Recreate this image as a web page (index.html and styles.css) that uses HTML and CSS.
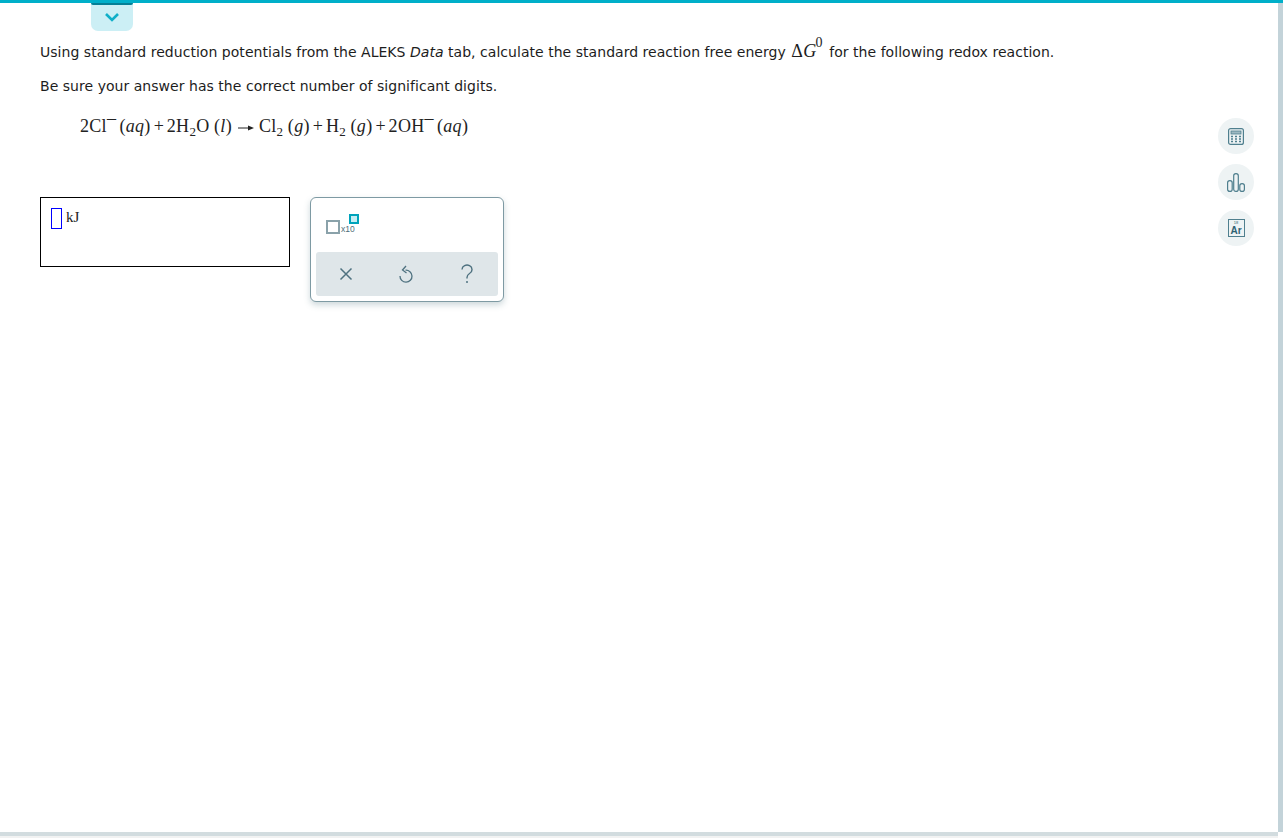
FILE: index.html
```html
<!DOCTYPE html>
<html lang="en">
<head>
<meta charset="utf-8">
<title>Redox reaction</title>
<link rel="stylesheet" href="styles.css">
</head>
<body>
<div class="page">
  <div class="topbar"></div>
  <div class="main">
    <div class="content">
      <div class="tab"><svg width="16" height="10" viewBox="0 0 16 10"><path d="M2 2l6 6 6-6" fill="none" stroke="#10afc8" stroke-width="2.6"/></svg></div>
      <p class="line first">Using standard reduction potentials from the ALEKS <i>Data</i> tab, calculate the standard reaction free energy <span class="math">Δ<i>G</i><sup class="zero">0</sup></span> for the following redox reaction.</p>
      <p class="line second">Be sure your answer has the correct number of significant digits.</p>
      <div class="equation"><span>2Cl</span><span class="charge">¯</span><span class="paren">(<i>aq</i>)</span><span class="plus">+</span><span>2H<sub>2</sub>O</span><span class="paren">(<i>l</i>)</span><svg class="arrow" width="16" height="8" viewBox="0 0 16 8"><path d="M0 4h11" stroke="#222" stroke-width="1"/><path d="M10 1.500l6 2.500-6 2.500z" fill="#222"/></svg><span>Cl<sub>2</sub></span><span class="paren">(<i>g</i>)</span><span class="plus">+</span><span>H<sub>2</sub></span><span class="paren">(<i>g</i>)</span><span class="plus">+</span><span>2OH</span><span class="charge">¯</span><span class="paren">(<i>aq</i>)</span></div>
      <div class="answer-row">
        <div class="answer">
          <span class="cursor"></span><span class="unit">kJ</span>
        </div>
        <div class="palette">
          <div class="palette-top">
            <span class="box"></span><span class="x10">x10</span><span class="expo"></span>
          </div>
          <div class="actions">
            <svg width="14" height="14" viewBox="0 0 14 14"><path d="M1.500 1.500l11 11M12.500 1.500l-11 11" stroke="#4f7280" stroke-width="1.500" fill="none"/></svg>
            <svg width="14" height="18" viewBox="0 0 14 18"><path d="M6.500 5.200A6 6 0 1 1 1 11M7 1L3.500 5l4 3" stroke="#4f7280" stroke-width="1.300" fill="none"/></svg>
            <svg width="14" height="20" viewBox="0 0 14 20"><path d="M2 5.500a5 4.500 0 1 1 7.500 4c-1.500 1-2.500 2-2.500 4v1" stroke="#4f7280" stroke-width="1.400" fill="none"/><circle cx="7" cy="18" r="1" fill="#4f7280"/></svg>
          </div>
        </div>
      </div>
    </div>
    <div class="rail">
      <div class="tool"><svg width="16" height="17" viewBox="0 0 16 17"><rect x=".6" y=".6" width="14.800" height="15.800" rx="2" fill="none" stroke="#4f7f8e" stroke-width="1.200"/><rect x="3" y="3" width="10" height="3" fill="#9db8c1" stroke="#4f7f8e" stroke-width=".8"/><path d="M3 8.500h2M7 8.500h2M11 8.500h2M3 11h2M7 11h2M11 11h2M3 13.500h2M7 13.500h2M11 13.500h2" stroke="#4f7f8e" stroke-width="1.500"/></svg></div>
      <div class="tool"><svg width="18" height="19" viewBox="0 0 18 19"><g fill="none" stroke="#4f7f8e" stroke-width="1.200"><rect x=".6" y="7.600" width="4.600" height="10.800" rx="2.200"/><rect x="6.700" y=".6" width="4.600" height="17.800" rx="2.200"/><rect x="12.800" y="10.600" width="4.600" height="7.800" rx="2.200"/></g></svg></div>
      <div class="tool"><div class="element"><span class="num">18</span><span class="sym">Ar</span></div></div>
    </div>
    <div class="edge"></div>
  </div>
  <div class="footer"></div>
</div>
</body>
</html>
```
FILE: styles.css
```css
html, body { margin: 0; padding: 0; background: #fff; }
.page { width: 1283px; height: 838px; display: flex; flex-direction: column; overflow: hidden; font-family: "DejaVu Sans", sans-serif; color: #1d1d1d; }
.topbar { height: 3px; background: #00afc9; flex: none; }
.main { flex: 1; display: flex; min-height: 0; }
.content { flex: 1; padding-left: 40px; min-width: 0; }
.tab { width: 42px; height: 28px; margin-left: 51px; background: #cceff5; border-radius: 0 0 7px 7px; display: flex; justify-content: center; align-items: center; box-sizing: border-box; padding-bottom: 1px; position: relative; }
.tab::before { content: ""; position: absolute; top: 0; left: 0; right: 0; height: 2px; background: #047f96; border-radius: 0 0 3px 3px; }
.line { margin: 0; font-size: 14px; line-height: 20px; height: 20px; white-space: nowrap; letter-spacing: 0.035px; }
.first { margin-top: 11px; }
.second { margin-top: 14px; }
.math { font-family: "Liberation Serif", serif; font-size: 18px; line-height: 0; letter-spacing: .3px; margin-left: 1px; margin-right: 1px; }
.zero { font-size: 14px; line-height: 0; vertical-align: 10px; margin-left: -1px; margin-right: 1px; }
.equation { display: flex; align-items: baseline; font-family: "Liberation Serif", serif; font-size: 18px; line-height: 30px; margin: 15px 0 0 40px; white-space: nowrap; color: #222; letter-spacing: .3px; }
.equation sub { font-size: 13px; line-height: 0; vertical-align: -4px; }
.charge { width: 8px; line-height: 0; position: relative; top: 1px; }
.paren { margin-left: 4.500px; letter-spacing: .3px; }
.plus { margin: 0 3px; letter-spacing: 0; }
.arrow { margin: 0 5px 0 6px; align-self: center; position: relative; top: 2px; }
.answer-row { display: flex; align-items: flex-start; gap: 20px; margin-top: 56px; }
.answer { width: 250px; height: 70px; border: 1px solid #000; box-sizing: border-box; padding: 10px 0 0 10px; display: flex; align-items: flex-start; }
.cursor { width: 9px; height: 19px; border: 1px solid #00f; display: block; }
.unit { font-family: "Liberation Serif", serif; font-size: 15px; line-height: 18px; margin-left: 4px; color: #222; }
.palette { width: 194px; height: 105px; box-sizing: border-box; border: 1px solid #7e9aa3; border-radius: 6px; padding: 0 5px 5px; box-shadow: 0 3px 6px rgba(90,125,135,.3); display: flex; flex-direction: column; justify-content: space-between; background: #fff; }
.palette-top { height: 54px; position: relative; }
.box { position: absolute; left: 10px; top: 22px; width: 10px; height: 10px; border: 2px solid #8aa2aa; }
.x10 { position: absolute; left: 25px; top: 26px; font-family: "Liberation Sans", sans-serif; font-size: 8.500px; line-height: 10px; color: #4f6f7b; }
.expo { position: absolute; left: 33px; top: 16px; width: 6px; height: 6px; border: 2px solid #00a3bb; background: #c5eef4; }
.actions { height: 44px; background: #dfe6e9; border-radius: 3px; display: flex; justify-content: space-around; align-items: center; padding-right: 1px; }
.rail { width: 36px; margin: 115px 24px 0 0; flex: none; display: flex; flex-direction: column; gap: 10px; }
.tool { width: 36px; height: 36px; border-radius: 50%; background: #eef3f4; display: flex; justify-content: center; align-items: center; }
.element { width: 15px; height: 16px; border: 1px solid #4f7f8e; display: flex; flex-direction: column; align-items: center; font-family: "Liberation Sans", sans-serif; color: #2f6273; }
.num { font-size: 4px; line-height: 6px; }
.sym { font-size: 10px; line-height: 10px; font-weight: 700; }
.edge { width: 5px; background: #c3d3d9; flex: none; }
.footer { height: 6px; flex: none; background: linear-gradient(#d2dcdf 0 4px, #f1f2f2 4px); margin-right: 5px; }
```
